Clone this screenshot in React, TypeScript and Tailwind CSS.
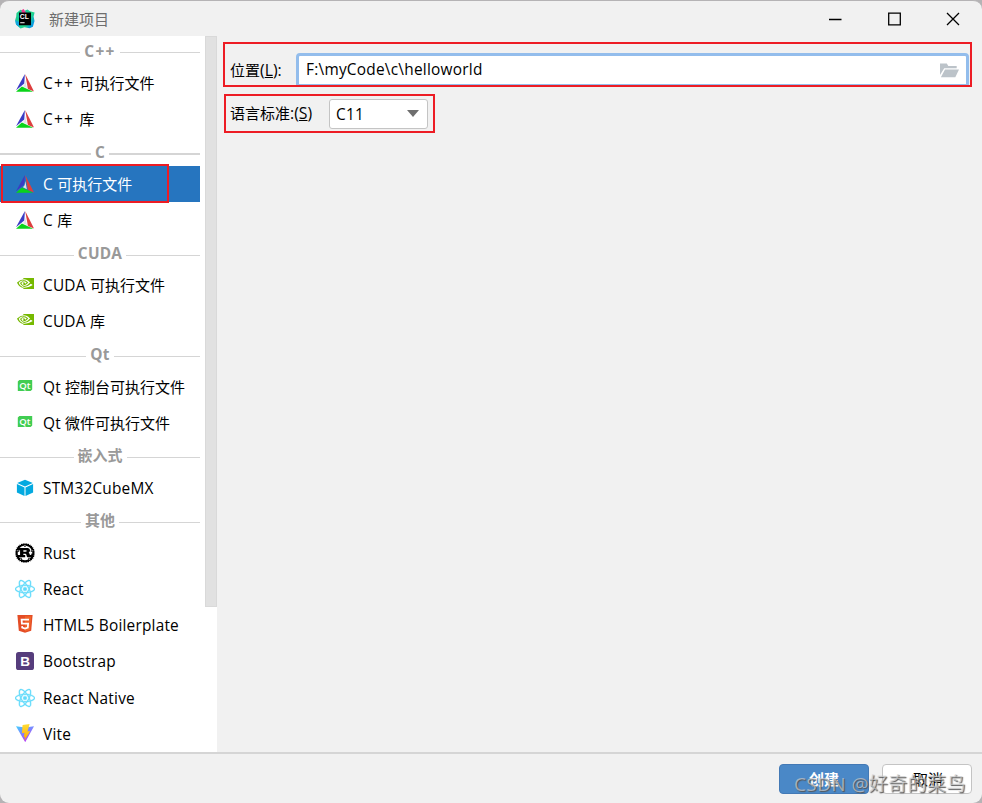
import type { ReactNode } from "react";
import { SiNvidia, SiRust, SiReact } from "react-icons/si";

const CMakeIcon = () => (
  <svg width="18" height="18" viewBox="0 0 18 18">
    <path d="M8.9 0 0 16.3 8.3 9.6z" fill="#3b3bc4" />
    <path d="M9.2 0 18 17.6 11.9 14.9z" fill="#dd3f3f" />
    <path d="M5.9 12.6 0 17.8h17.2z" fill="#0ad31a" />
    <path d="M9.3 6 10.9 14.3 6.9 12.2 8.6 10.2z" fill="#dfe3e8" />
  </svg>
);

const NvidiaIcon = () => <SiNvidia size={17} color="#76b900" className="relative -top-0.5" />;

const QtIcon = () => (
  <svg width="18" height="18" viewBox="0 0 18 18">
    <path d="M3.4 2h12.8v9.4L14.6 13H1.8V3.6z" fill="#41cd52" />
    <text x="8.9" y="10.6" textAnchor="middle" fontSize="9.5" fontWeight="600" fill="#fff" fontFamily="Open Sans">Qt</text>
  </svg>
);

const CubeIcon = () => (
  <svg width="18" height="18" viewBox="0 0 18 18">
    <path d="M9 .8 16.8 4 9 7.6 1.2 4z" fill="#03a9e0" />
    <path d="M.9 4.9 8.5 8.4V17L.9 13.4zM17.1 4.9 9.5 8.4V17l7.6-3.6z" fill="#03a9e0" />
  </svg>
);

const RustIcon = () => <SiRust size={20} color="#000" />;
const ReactIcon = () => <SiReact size={20} color="#61dafb" stroke="#61dafb" strokeWidth={0.5} />;

const Html5Icon = () => (
  <svg width="18" height="18" viewBox="0 0 18 18" className="relative -top-px">
    <path d="M1.4 0h15.2l-1.4 15.8L9 17.8l-6.2-2z" fill="#e44d26" />
    <path d="M9 1.3h6.2L14 14.8l-5 1.6z" fill="#f16529" />
    <path d="M13 4.6H5.6l.3 4h6.2l-.3 4.1L9 13.6l-2.8-.9-.1-1.6" fill="none" stroke="#fff" strokeWidth="1.8" />
  </svg>
);

const BootstrapIcon = () => (
  <svg width="18" height="18" viewBox="0 0 18 18" className="relative -top-px">
    <rect width="18" height="18" rx="2.6" fill="#563d7c" />
    <text x="9.2" y="13.8" textAnchor="middle" fontSize="13.5" fontWeight="700" fill="#fff" fontFamily="Liberation Sans">B</text>
  </svg>
);

const ViteIcon = () => (
  <svg width="18" height="18" viewBox="0 0 18 18" className="relative -top-px">
    <defs>
      <linearGradient id="vite" x1="0" y1="0" x2=".6" y2="1">
        <stop offset="0" stopColor="#41d1ff" />
        <stop offset="1" stopColor="#bd34fe" />
      </linearGradient>
      <linearGradient id="bolt" x1="0" y1="0" x2="0" y2="1">
        <stop offset="0" stopColor="#ffdd35" />
        <stop offset="1" stopColor="#ffa800" />
      </linearGradient>
    </defs>
    <path d="M0 2.2 9.2 18.2 18 2.2 9 3.4z" fill="url(#vite)" />
    <path d="M13.6 0 6.6 1.1l-.7 8.2 2.6-.5-.8 4.4 1.5-.4-.9 4 6-9.8-2.8.5z" fill="url(#bolt)" />
  </svg>
);

const ClionIcon = () => (
  <svg width="20" height="20" viewBox="0 0 20 20">
    <defs>
      <linearGradient id="clion" x1="0" y1="0" x2="1" y2=".6">
        <stop offset="0" stopColor="#21d789" />
        <stop offset=".45" stopColor="#1fc99a" />
        <stop offset=".75" stopColor="#21d789" />
        <stop offset="1" stopColor="#079ae0" />
      </linearGradient>
    </defs>
    <path d="M1.5 4 5.5.8 9 2l3.5-1.4L15 2.2l4.6 1.2-1 4.2.9 4.4-1.6 5.8-3.4 1.4-5-1-4 1.2L1 15.6.2 11l1-3.5z" fill="url(#clion)" />
    <path d="M.2 11 4 13v4l1.5 2L1 15.6z" fill="#12a5e0" />
    <path d="M6.4 1.2 8.6 0l2.6 4H7z" fill="#ed358c" />
    <path d="M4 3.6h12v12.6H4z" fill="#000" />
    <text x="4.8" y="9.8" fontSize="6.8" fontWeight="700" fill="#fff" fontFamily="Liberation Sans">CL</text>
    <path d="M5.2 13.3h4.4v1H5.2z" fill="#fff" />
  </svg>
);

type Item = { label: string; icon: () => ReactNode; selected?: boolean };

const groups: { title: string; items: Item[] }[] = [
  {
    title: "C++",
    items: [
      { label: "C++ 可执行文件", icon: CMakeIcon },
      { label: "C++ 库", icon: CMakeIcon },
    ],
  },
  {
    title: "C",
    items: [
      { label: "C 可执行文件", icon: CMakeIcon, selected: true },
      { label: "C 库", icon: CMakeIcon },
    ],
  },
  {
    title: "CUDA",
    items: [
      { label: "CUDA 可执行文件", icon: NvidiaIcon },
      { label: "CUDA 库", icon: NvidiaIcon },
    ],
  },
  {
    title: "Qt",
    items: [
      { label: "Qt 控制台可执行文件", icon: QtIcon },
      { label: "Qt 微件可执行文件", icon: QtIcon },
    ],
  },
  { title: "嵌入式", items: [{ label: "STM32CubeMX", icon: CubeIcon }] },
  {
    title: "其他",
    items: [
      { label: "Rust", icon: RustIcon },
      { label: "React", icon: ReactIcon },
      { label: "HTML5 Boilerplate", icon: Html5Icon },
      { label: "Bootstrap", icon: BootstrapIcon },
      { label: "React Native", icon: ReactIcon },
      { label: "Vite", icon: ViteIcon },
    ],
  },
];

// Latin runs are set slightly larger than the Chinese ones
function Label({ text }: { text: string }) {
  const [, latin, rest] = text.match(/^([\x20-\x7e]*)(.*)$/)!;
  return (
    <>
      {latin && (
        <span className={latin.startsWith("C++") ? "text-[15.4px] tracking-[1.3px]" : "text-[15.4px] tracking-[0.21px]"}>
          {latin}
        </span>
      )}
      {rest}
    </>
  );
}

function TitleBar() {
  return (
    <header className="flex h-[35px] shrink-0 items-center pl-[15px]">
      <ClionIcon />
      <h1 className="ml-3.5 grow text-[15px] leading-5 text-[#6e6e6e]">新建项目</h1>
      <svg width="160" height="20" viewBox="0 0 160 20" fill="none" stroke="#000" strokeWidth="1.3">
        <path d="M7 10.5h12.5" />
        <path d="M66.7 4.2h11.6v11.6H66.7z" />
        <path d="m125 4 12 12m0-12-12 12" />
      </svg>
    </header>
  );
}

function Sidebar() {
  return (
    <aside className="flex w-[217px] shrink-0 justify-between overflow-hidden bg-white">
      <nav className="w-[200px]">
        {groups.map((group) => {
          const rule = group.title === "C" ? "mt-[5px] h-0.5 grow bg-[#d5d5d5]" : "mt-[4.4px] h-px grow bg-[#d5d5d5]";
          const isLatin = /^[\x20-\x7e]+$/.test(group.title);
          return (
            <section key={group.title}>
              <div className="flex h-[28.8px] items-center gap-[4px] text-[#999]">
                <span className={rule} />
                <h2 className={`text-[15px] leading-5 font-bold ${isLatin ? "pt-[1.5px]" : "-mt-[1.5px]"}`}>
                  <Label text={group.title} />
                </h2>
                <span className={rule} />
              </div>
              {group.items.map(({ label, icon: Icon, selected }) => (
                <div
                  key={label}
                  className={`relative flex h-[36.23px] items-center pl-[15px] text-[15px] ${selected ? "bg-[#2675bf] text-white" : "text-black"}`}
                >
                  <span className="flex w-5 justify-center">
                    <Icon />
                  </span>
                  <span className="ml-2 pt-[0.8px] leading-5 whitespace-nowrap">
                    <Label text={label} />
                  </span>
                  {selected && <span className="absolute top-[-2px] left-px h-[39px] w-[168px] border-2 border-[#ed1c24]" />}
                </div>
              ))}
            </section>
          );
        })}
      </nav>
      <div className="h-[571px] w-3 border border-[#d9d9d9] bg-[#e1e1e1]" />
    </aside>
  );
}

function SettingsForm() {
  return (
    <main className="flex grow flex-col items-start gap-[7px] pt-1.5 pl-1.5 text-[15px] text-black">
      <div className="flex h-[45px] w-[749px] items-end border-2 border-[#ed1c24] pr-px pl-[5px]">
        <label className="w-[66px] pb-[5px] leading-5">
          位置<span className="text-[15.8px]">(<u>L</u>):</span>
        </label>
        <div className="flex h-8 grow items-center rounded-t-sm border-3 border-b-1 border-[#93bdec] bg-white pr-[7px] pb-px pl-[7px]">
          <span className="grow text-[15.4px] leading-5 tracking-[0.25px]">F:\myCode\c\helloworld</span>
          <svg width="19" height="15" viewBox="0 0 19 15" fill="#bcc3c9" className="relative top-px">
            <path d="M0 .5h6.8l1.5 2.6h8.4v2.2H4.2L0 12z" />
            <path d="M5 6.5h14L15.3 14.3H.9z" />
          </svg>
        </div>
      </div>
      <div className="ml-px flex h-[39px] w-[211px] items-center border-2 border-[#ed1c24] pl-1">
        <label className="w-[99px] pb-px leading-5">
          语言标准<span className="text-[15.8px]">:(<u>S</u>)</span>
        </label>
        <div className="flex h-[30px] w-[99px] items-center justify-between rounded-[3px] border border-[#c4c4c4] bg-white pr-2 pl-1.5">
          <span className="pt-0.5 text-[15.4px] leading-5 tracking-[0.2px]">C11</span>
          <svg width="12" height="7" viewBox="0 0 12 7" fill="#6e6e6e">
            <path d="M0 0h12L6 7z" />
          </svg>
        </div>
      </div>
    </main>
  );
}

function Footer() {
  return (
    <footer className="relative flex h-[51px] shrink-0 justify-end gap-[13px] border-t-2 border-[#d5d5d5] pt-2.5 pr-2.5 text-[15px]">
      <button className="h-[30px] w-[90px] rounded-[4px] border border-[#4379b5] bg-[#4a88c7] font-bold text-white">创建</button>
      <button className="h-[30px] w-[90px] rounded-[4px] border border-[#c4c4c4] bg-white pl-0.5 text-black">取消</button>
      <span className="absolute top-[18px] left-[794px] text-[19px] leading-6 tracking-[0.4px] whitespace-nowrap text-[#ccccccb0] [text-shadow:1px_1px_1px_#555]">
        CSDN @好奇的菜鸟
      </span>
    </footer>
  );
}

export default function App() {
  return (
    <div className="h-[803px] w-[982px] overflow-hidden bg-[#b5b3b5] font-['Open_Sans','Noto_Sans_CJK_SC',sans-serif]">
      <div className="flex h-full flex-col overflow-hidden rounded-[9px] border-t border-[#b5b3b5] bg-[#f1f1f1]">
        <TitleBar />
        <div className="flex min-h-0 grow">
          <Sidebar />
          <SettingsForm />
        </div>
        <Footer />
      </div>
    </div>
  );
}
